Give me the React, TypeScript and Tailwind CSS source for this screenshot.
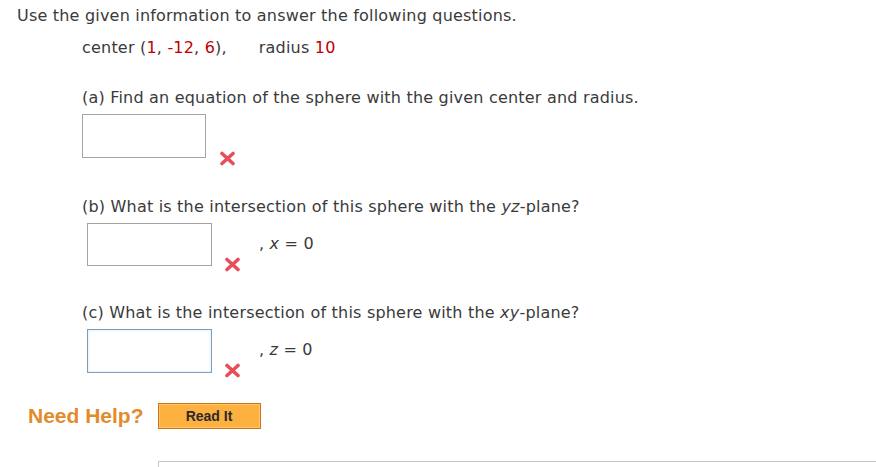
const font = { fontFamily: '"DejaVu Sans", Verdana, sans-serif' };

function Cross() {
  return (
    <svg width="17" height="15" viewBox="0 0 17 15" className="block">
      <path
        d="M3 2.5 L14 12.5 M14 2.5 L3 12.5"
        stroke="#e84e5a"
        strokeWidth="3.6"
        strokeLinecap="round"
        fill="none"
      />
    </svg>
  );
}

function AnswerRow({ label, focus }: { label?: React.ReactNode; focus?: boolean }) {
  return (
    <div className="flex items-start pl-[5px]">
      <div
        className={
          focus
            ? "h-[44px] w-[125px] border border-[#7f9db9] bg-white shadow-[inset_0_0_3px_#cfe4f8]"
            : "h-[43px] w-[125px] border border-[#a3a3a3] bg-white"
        }
      />
      <div className="ml-[12px] mt-[34px]">
        <Cross />
      </div>
      {label && <div className="ml-[18px] mt-[12px] text-[16px] leading-[18px]">{label}</div>}
    </div>
  );
}

export default function App() {
  return (
    <main className="min-h-screen bg-white pt-[7px] tracking-[0.2px] text-[#3a3a3a]" style={font}>
      <p className="pl-[17px] text-[16px] leading-[18px]">
        Use the given information to answer the following questions.
      </p>

      <div className="pl-[82px]">
        <p className="mt-[14px] text-[16px] leading-[18px]">
          center (<span className="text-[#c00000]">1</span>, <span className="text-[#c00000]">-12</span>,{" "}
          <span className="text-[#c00000]">6</span>),
          <span className="ml-[32px]">
            radius <span className="text-[#c00000]">10</span>
          </span>
        </p>

        <p className="mt-[32px] text-[16px] leading-[18px]">
          (a) Find an equation of the sphere with the given center and radius.
        </p>
        <div className="mt-[7px] flex items-start">
          <div className="h-[44px] w-[124px] border border-[#a3a3a3] bg-white" />
          <div className="ml-[13px] mt-[37px]">
            <Cross />
          </div>
        </div>

        <p className="mt-[32px] text-[16px] leading-[18px]">
          (b) What is the intersection of this sphere with the <i>yz</i>-plane?
        </p>
        <div className="mt-[7px]">
          <AnswerRow label={<>, <i>x</i> = 0</>} />
        </div>

        <p className="mt-[32px] text-[16px] leading-[18px]">
          (c) What is the intersection of this sphere with the <i>xy</i>-plane?
        </p>
        <div className="mt-[7px]">
          <AnswerRow focus label={<>, <i>z</i> = 0</>} />
        </div>
      </div>

      <div className="mt-[25px] flex items-center pl-[28px] tracking-normal">
        <span
          className="text-[21px] font-bold leading-[24px] text-[#e38b2c]"
          style={{ fontFamily: '"Liberation Sans", Arial, sans-serif' }}
        >
          Need Help?
        </span>
        <button
          className="ml-[14px] flex h-[26px] w-[103px] items-center justify-center border border-[#c8741a] bg-[#fbb040] shadow-[inset_0_0_0_1px_#ffc766] text-[14px] font-bold text-[#2b2b2b]"
          style={{ fontFamily: '"Liberation Sans", Arial, sans-serif' }}
        >
          Read It
        </button>
      </div>

      <div className="ml-[158px] mt-[32px] h-[40px] border-l border-t border-[#c8c8c8]" />
    </main>
  );
}
